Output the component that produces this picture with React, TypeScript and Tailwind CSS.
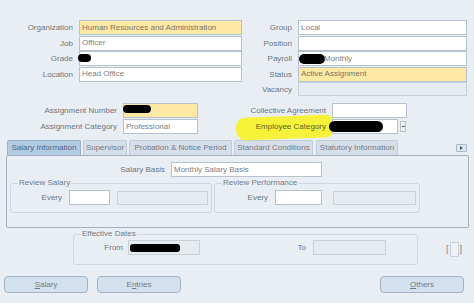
import React from "react";

const F = "text-[8px] leading-none";

export default function App() {
  const field = "h-[15px] border border-[#b7c2ce] flex items-center px-[2px] overflow-hidden whitespace-nowrap text-[#7b8086]";
  const white = field + " bg-white";
  const yellow = field + " bg-[#fde9a3]";
  const gray = "h-[14px] border border-[#c8d0d9] bg-[#e6ebf1]";
  const label = "text-right text-[#6d747d] whitespace-nowrap";
  return (
    <div
      className={"w-[474px] h-[303px] bg-[#e9eef4] overflow-hidden flex flex-col " + F}
      style={{ fontFamily: '"Liberation Sans", Arial, sans-serif' }}
    >
      {/* top section */}
      <div className="mt-[20px] flex">
        <div className="w-[242px] flex flex-col">
          <div className="flex h-[15.5px] items-start">
            <span className={label + " w-[73px] mt-[4px]"}>Organization</span>
            <div className={yellow + " ml-[6px] w-[163px] text-[#77766a]"}>Human Resources and Administration</div>
          </div>
          <div className="flex h-[15.5px] items-start">
            <span className={label + " w-[73px] mt-[4px]"}>Job</span>
            <div className={white + " ml-[6px] w-[163px]"}>Officer</div>
          </div>
          <div className="flex h-[15.5px] items-start">
            <span className={label + " w-[73px] mt-[4px]"}>Grade</span>
            <div className={white + " ml-[6px] w-[163px] overflow-visible"}>
              <div className="-ml-[4px] -mt-[2px] w-[13px] h-[8px] bg-black rounded-[4px]" />
            </div>
          </div>
          <div className="flex h-[15.5px] items-start">
            <span className={label + " w-[73px] mt-[4px]"}>Location</span>
            <div className={white + " ml-[6px] w-[163px]"}>Head Office</div>
          </div>
        </div>
        <div className="flex flex-col">
          <div className="flex h-[15.5px] items-start">
            <span className={label + " w-[50px] mt-[4px]"}>Group</span>
            <div className={white + " ml-[6px] w-[169px]"}>Local</div>
          </div>
          <div className="flex h-[15.5px] items-start">
            <span className={label + " w-[50px] mt-[4px]"}>Position</span>
            <div className={white + " ml-[6px] w-[169px]"} />
          </div>
          <div className="flex h-[15.5px] items-start">
            <span className={label + " w-[50px] mt-[4px]"}>Payroll</span>
            <div className={white + " ml-[6px] w-[169px] overflow-visible"}>
              <div className="-ml-[2px] w-[26px] h-[10px] bg-black rounded-full" />
              <span className="ml-[-1px]">Monthly</span>
            </div>
          </div>
          <div className="flex h-[15.5px] items-start">
            <span className={label + " w-[50px] mt-[4px]"}>Status</span>
            <div className={yellow + " ml-[6px] w-[169px] text-[#77766a]"}>Active Assignment</div>
          </div>
          <div className="flex h-[15.5px] items-start">
            <span className={label + " w-[50px] mt-[4px]"}>Vacancy</span>
            <div className={gray + " ml-[6px] w-[169px]"} />
          </div>
        </div>
      </div>

      {/* assignment section */}
      <div className="mt-[5.5px] flex">
        <div className="w-[198px] flex flex-col gap-[1px]">
          <div className="flex items-start h-[15px]">
            <span className={label + " w-[117px] mt-[4px]"}>Assignment Number</span>
            <div className={yellow + " ml-[6px] w-[75px] overflow-visible"}>
              <div className="-ml-[3px] w-[28px] h-[8px] bg-black rounded-full -mt-[4px]" />
            </div>
          </div>
          <div className="flex items-start h-[15px]">
            <span className={label + " w-[117px] mt-[4px]"}>Assignment Category</span>
            <div className={white + " ml-[6px] w-[75px]"}>Professional</div>
          </div>
        </div>
        <div className="flex flex-col gap-[1px]">
          <div className="flex items-start h-[15px]">
            <span className={label + " w-[128px] mt-[4px]"}>Collective Agreement</span>
            <div className={white + " ml-[6px] w-[75px]"} />
          </div>
          <div className="flex items-start h-[15px]">
            <span className={label + " w-[128px] mt-[4px] relative"}>
              <span className="absolute left-[38px] right-[-9px] top-[-7px] bottom-[-8px] bg-[#f6f23a] rounded-[10px] rotate-[-2deg]" />
              <span className="relative text-[#60642a]">Employee Category</span>
            </span>
            <div className={white + " ml-[6px] w-[66px] overflow-visible relative"}>
              <div className="-ml-[6px] w-[54px] h-[11px] bg-black rounded-[6px]" />
            </div>
            <div className="ml-[2px] mt-[2px] w-[6px] h-[11px] border border-[#b7c2ce] bg-[#eef2f6] flex items-center justify-center">
              <div className="w-[3px] h-px bg-[#666]" />
            </div>
          </div>
        </div>
      </div>

      {/* tabs */}
      <div className="mt-[6px] flex items-end h-[15px] pl-[7px] pr-[7px]">
        <div className="w-[74px] h-[15px] bg-[#b3cbe1] border border-[#98b2cb] border-b-0 rounded-t-[2px] flex items-center justify-center text-[#4d6784]">Salary Information</div>
        <div className="ml-[2px] w-[44px] h-[15px] bg-[#d6dfe9] border border-[#c1ccd8] border-b-0 rounded-t-[2px] flex items-center justify-center text-[#737b84]">Supervisor</div>
        <div className="ml-[2px] w-[103px] h-[15px] bg-[#d6dfe9] border border-[#c1ccd8] border-b-0 rounded-t-[2px] flex items-center justify-center text-[#737b84]">Probation &amp; Notice Period</div>
        <div className="ml-[2px] w-[79px] h-[15px] bg-[#d6dfe9] border border-[#c1ccd8] border-b-0 rounded-t-[2px] flex items-center justify-center text-[#737b84]">Standard Conditions</div>
        <div className="ml-[3px] w-[82px] h-[15px] bg-[#d6dfe9] border border-[#c1ccd8] border-b-0 rounded-t-[2px] flex items-center justify-center text-[#737b84]">Statutory Information</div>
        <div className="ml-auto mb-[3px] w-[11px] h-[8px] border border-[#a8b6c6] bg-[#dde6ef] rounded-[1px] flex items-center justify-center">
          <svg width="3" height="4" viewBox="0 0 3 4"><path d="M0 0 L3 2 L0 4 Z" fill="#4a5a6c" /></svg>
        </div>
      </div>

      {/* tab panel */}
      <div className="ml-[6px] w-[463px] h-[73px] border border-[#a6b1bd] rounded-[2px] flex flex-col">
        <div className="mt-[6px] flex items-center">
          <span className={label + " w-[158px]"}>Salary Basis</span>
          <div className={white + " ml-[6px] w-[151px] h-[14px]"}>Monthly Salary Basis</div>
        </div>
        <div className="mt-[6px] flex">
          <div className="ml-[3px] w-[202px] h-[30px] border border-[#cfd6df] rounded-[3px] relative">
            <span className="absolute left-[7px] top-[-5px] px-[1px] bg-[#e9eef4] text-[#737b84]">Review Salary</span>
            <div className="mt-[6px] flex items-center">
              <span className={label + " w-[51px]"}>Every</span>
              <div className={white + " ml-[7px] w-[41px]"} />
              <div className={gray + " ml-[7px] w-[91px]"} />
            </div>
          </div>
          <div className="ml-[2px] w-[206px] h-[30px] border border-[#cfd6df] rounded-[3px] relative">
            <span className="absolute left-[7px] top-[-5px] px-[1px] bg-[#e9eef4] text-[#737b84]">Review Performance</span>
            <div className="mt-[6px] flex items-center">
              <span className={label + " w-[53px]"}>Every</span>
              <div className={white + " ml-[7px] w-[47px]"} />
              <div className={gray + " ml-[11px] w-[83px]"} />
            </div>
          </div>
        </div>
      </div>

      {/* effective dates */}
      <div className="mt-[6px] flex items-center">
        <div className="ml-[73px] w-[345px] h-[31px] border border-[#cfd6df] rounded-[3px] relative">
          <span className="absolute left-[7px] top-[-5px] px-[1px] bg-[#e9eef4] text-[#737b84]">Effective Dates</span>
          <div className="mt-[5px] flex items-center">
            <span className={label + " w-[49px]"}>From</span>
            <div className={"ml-[5px] w-[72px] " + gray + " h-[15px] flex items-center"}>
              <div className="ml-[1px] w-[50px] h-[8px] bg-black rounded-[3px]" />
            </div>
            <span className={label + " w-[106px]"}>To</span>
            <div className={gray + " ml-[7px] w-[73px] h-[15px]"} />
          </div>
        </div>
        <div className="ml-[28px] flex items-center text-[#7b8086] text-[9px]">
          <span>[</span>
          <div className="mx-[1px] w-[9px] h-[15px] border border-[#c8d0d9] bg-[#eef2f6]" />
          <span>]</span>
        </div>
      </div>

      {/* buttons */}
      <div className="mt-[11px] flex">
        <div className="ml-[4px] w-[84px] h-[17px] bg-[#d3e1ef] border border-[#a3b3c4] rounded-[4px] flex items-center justify-center text-[#737b84]">
          <span><span className="underline">S</span>alary</span>
        </div>
        <div className="ml-[9px] w-[84px] h-[17px] bg-[#d3e1ef] border border-[#a3b3c4] rounded-[4px] flex items-center justify-center text-[#737b84]">
          <span>E<span className="underline">n</span>tries</span>
        </div>
        <div className="ml-[199px] w-[84px] h-[17px] bg-[#d3e1ef] border border-[#a3b3c4] rounded-[4px] flex items-center justify-center text-[#737b84]">
          <span><span className="underline">O</span>thers</span>
        </div>
      </div>
    </div>
  );
}
